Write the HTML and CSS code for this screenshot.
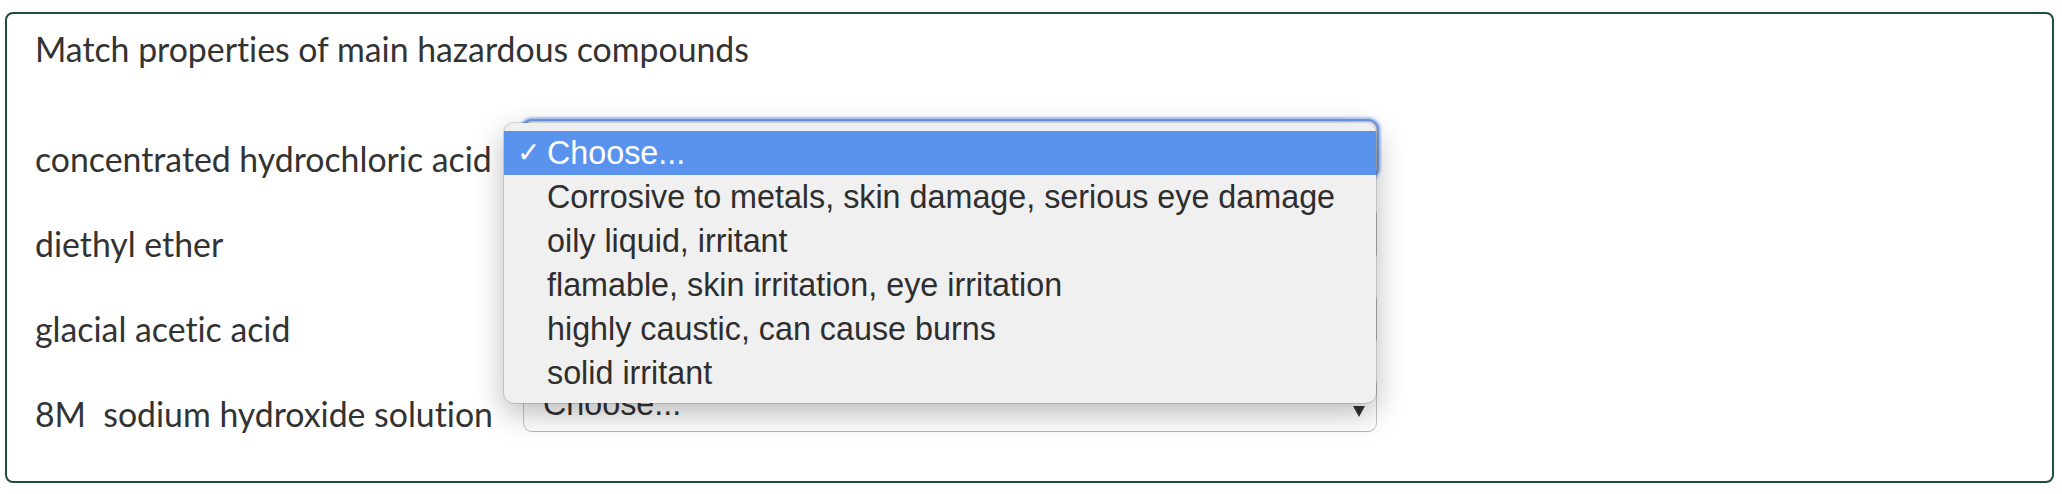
FILE: index.html
```html
<!DOCTYPE html>
<html lang="en">
<head>
<meta charset="utf-8">
<title>Match properties</title>
<link rel="stylesheet" href="styles.css">
</head>
<body>
<div class="card">
  <p class="title">Match properties of main hazardous compounds</p>
  <div class="rows">
    <div class="row">
      <label class="label">concentrated hydrochloric acid</label>
      <div class="select-wrap">
        <div class="select focused"><span class="select-text">Choose...</span><svg class="arrow" viewBox="0 0 12 12" width="12" height="12"><path d="M0 1 L12 1 L6 12 Z" fill="#333"/></svg></div>
        <ul class="popup">
          <li class="opt sel"><span class="check">✓</span>Choose...</li>
          <li class="opt">Corrosive to metals, skin damage, serious eye damage</li>
          <li class="opt">oily liquid, irritant</li>
          <li class="opt">flamable, skin irritation, eye irritation</li>
          <li class="opt">highly caustic, can cause burns</li>
          <li class="opt">solid irritant</li>
        </ul>
      </div>
    </div>
    <div class="row">
      <label class="label">diethyl ether</label>
      <div class="select-wrap">
        <div class="select"><span class="select-text">Choose...</span><svg class="arrow" viewBox="0 0 12 12" width="12" height="12"><path d="M0 1 L12 1 L6 12 Z" fill="#333"/></svg></div>
      </div>
    </div>
    <div class="row">
      <label class="label">glacial acetic acid</label>
      <div class="select-wrap">
        <div class="select"><span class="select-text">Choose...</span><svg class="arrow" viewBox="0 0 12 12" width="12" height="12"><path d="M0 1 L12 1 L6 12 Z" fill="#333"/></svg></div>
      </div>
    </div>
    <div class="row">
      <label class="label">8M&nbsp; sodium hydroxide solution</label>
      <div class="select-wrap">
        <div class="select"><span class="select-text">Choose...</span><svg class="arrow" viewBox="0 0 12 12" width="12" height="12"><path d="M0 1 L12 1 L6 12 Z" fill="#333"/></svg></div>
      </div>
    </div>
  </div>
</div>
</body>
</html>
```

FILE: styles.css
```css
* { box-sizing: border-box; }
html, body { margin: 0; background: #fff; }
body {
  font-family: Lato, "Open Sans", sans-serif;
  color: #333;
  font-variant-ligatures: none;
}

.card {
  margin: 12px 8px 0 5px;
  border: 2px solid #1e4d42;
  border-radius: 8px;
  padding: 11px 28px 49px 28px;
  position: relative;
}

.title { margin: 0; font-size: 33.8px; line-height: 48px; }

.rows { display: flex; flex-direction: column; gap: 29px; margin-top: 48px; }

.row {
  display: grid;
  grid-template-columns: 488px 854px;
  align-items: start;
  height: 56px;
}

.label {
  justify-self: start;
  font-size: 33.8px;
  line-height: 36px;
  padding-top: 20px;
  white-space: nowrap;
}

.select-wrap { position: relative; }

.select {
  height: 56px;
  border: 1px solid #c6c6c6;
  border-bottom-color: #b5b5b5;
  border-radius: 9px;
  background: #fff;
  display: flex;
  align-items: center;
  justify-content: space-between;
  padding: 0 11px 0 19px;
  font-family: "Liberation Sans", Arial, sans-serif;
  font-size: 32.3px;
  color: #333;
}

.arrow { margin-top: 14px; }

.select.focused { box-shadow: 0 0 0 2px #6b98e6, 0 0 2px 4px rgba(110, 155, 235, 0.55); }

.popup {
  position: absolute;
  left: -19px;
  top: 2px;
  width: 872px;
  margin: 0;
  padding: 8px 0;
  list-style: none;
  background: #f0f0f0;
  border-radius: 10px;
  box-shadow: 0 0 0 1px rgba(0, 0, 0, 0.13), 0 10px 30px rgba(0, 0, 0, 0.28);
  z-index: 2;
  font-family: "Liberation Sans", Arial, sans-serif;
  font-size: 32.3px;
}

.opt { height: 44px; line-height: 44px; padding-left: 43px; position: relative; color: #2e2e2e; white-space: nowrap; }
.opt.sel { background: #5a93ee; color: #fff; }
.check { position: absolute; left: 13px; top: 0; font-size: 28px; }
```
